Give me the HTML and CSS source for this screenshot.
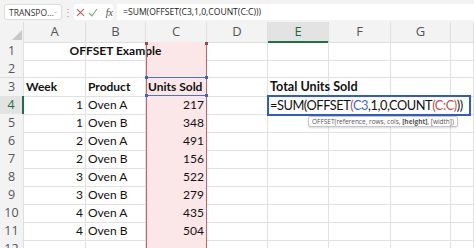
FILE: index.html
```html
<!DOCTYPE html>
<html>
<head>
  <title>OFFSET Example</title>
  <link rel="stylesheet" href="styles.css">
</head>
<body>
  <div class="app">
    <div class="toolbar">
      <div class="namebox">
        <span>TRANSPO...</span>
        <svg width="7" height="5" viewBox="0 0 7 5"><path d="M1 1l2.5 2.5L6 1" fill="none" stroke="#666" stroke-width="1"/></svg>
      </div>
      <span class="dots">&#8942;</span>
      <div class="fxbox">
        <svg width="9" height="9" viewBox="0 0 9 9"><path d="M1 1l7 7M8 1L1 8" stroke="#d9534f" stroke-width="1.1"/></svg>
        <svg width="10" height="9" viewBox="0 0 10 9"><path d="M1 5l3 3 5-7" fill="none" stroke="#6cb36c" stroke-width="1.1"/></svg>
        <i class="fx">fx</i>
      </div>
      <div class="formula">=SUM(OFFSET(C3,1,0,COUNT(C:C)))</div>
    </div>

    <div class="sheet">
      <div class="row head">
        <div class="corner"><svg width="10" height="10" viewBox="0 0 10 10"><polygon points="10,0 10,10 0,10" fill="#c8c8c8"/></svg></div>
        <div class="ch">A</div><div class="ch">B</div><div class="ch">C</div><div class="ch">D</div>
        <div class="ch active">E</div><div class="ch">F</div><div class="ch">G</div><div class="ch"></div>
      </div>

      <div class="row">
        <div class="rh">1</div><div class="c"></div><div class="c b center over">OFFSET Example</div><div class="c hl"></div><div class="c"></div><div class="c"></div><div class="c"></div><div class="c"></div><div class="c"></div>
      </div>
      <div class="row">
        <div class="rh">2</div><div class="c"></div><div class="c"></div><div class="c hl"></div><div class="c"></div><div class="c"></div><div class="c"></div><div class="c"></div><div class="c"></div>
      </div>
      <div class="row">
        <div class="rh">3</div><div class="c b">Week</div><div class="c b">Product</div><div class="c hl b">Units Sold</div><div class="c"></div><div class="c b over">Total Units Sold</div><div class="c"></div><div class="c"></div><div class="c"></div>
      </div>
      <div class="row">
        <div class="rh active">4</div><div class="c num">1</div><div class="c">Oven A</div><div class="c hl num">217</div><div class="c"></div><div class="c"></div><div class="c"></div><div class="c"></div><div class="c"></div>
      </div>
      <div class="row">
        <div class="rh">5</div><div class="c num">1</div><div class="c">Oven B</div><div class="c hl num">348</div><div class="c"></div><div class="c"></div><div class="c"></div><div class="c"></div><div class="c"></div>
      </div>
      <div class="row">
        <div class="rh">6</div><div class="c num">2</div><div class="c">Oven A</div><div class="c hl num">491</div><div class="c"></div><div class="c"></div><div class="c"></div><div class="c"></div><div class="c"></div>
      </div>
      <div class="row">
        <div class="rh">7</div><div class="c num">2</div><div class="c">Oven B</div><div class="c hl num">156</div><div class="c"></div><div class="c"></div><div class="c"></div><div class="c"></div><div class="c"></div>
      </div>
      <div class="row">
        <div class="rh">8</div><div class="c num">3</div><div class="c">Oven A</div><div class="c hl num">522</div><div class="c"></div><div class="c"></div><div class="c"></div><div class="c"></div><div class="c"></div>
      </div>
      <div class="row">
        <div class="rh">9</div><div class="c num">3</div><div class="c">Oven B</div><div class="c hl num">279</div><div class="c"></div><div class="c"></div><div class="c"></div><div class="c"></div><div class="c"></div>
      </div>
      <div class="row">
        <div class="rh">10</div><div class="c num">4</div><div class="c">Oven A</div><div class="c hl num">435</div><div class="c"></div><div class="c"></div><div class="c"></div><div class="c"></div><div class="c"></div>
      </div>
      <div class="row">
        <div class="rh">11</div><div class="c num">4</div><div class="c">Oven B</div><div class="c hl num">504</div><div class="c"></div><div class="c"></div><div class="c"></div><div class="c"></div><div class="c"></div>
      </div>
      <div class="row">
        <div class="rh">12</div><div class="c"></div><div class="c"></div><div class="c hl"></div><div class="c"></div><div class="c"></div><div class="c"></div><div class="c"></div><div class="c"></div>
      </div>

      <!-- range highlights and the cell editor sit over the grid -->
      <div class="range-col"></div>
      <div class="range-c3">
        <span class="knob tl"></span><span class="knob tr"></span>
        <span class="knob bl"></span><span class="knob br"></span>
      </div>
      <div class="editor">=SUM(OFFSET<span class="red">(</span><span class="blue">C3</span>,1,0,COUNT<span class="red">(C:C)</span>))</div>
      <div class="tip">OFFSET(reference, rows, cols, <b>[height]</b>, [width])</div>
    </div>
  </div>
</body>
</html>
```

FILE: styles.css
```css
body {
  margin: 0;
  background: #ffffff;
}

.app {
  width: 474px;
  height: 248px;
  overflow: hidden;
  font-family: "Open Sans", "Noto Sans", sans-serif;
}

/* formula bar */
.toolbar {
  display: flex;
  align-items: center;
  height: 22px;
  padding: 2px 0 0 4px;
  box-sizing: border-box;
  background: #f3f3f3;
}

.namebox {
  display: flex;
  align-items: center;
  justify-content: space-between;
  width: 58px;
  height: 16px;
  padding: 0 4px;
  box-sizing: border-box;
  background: white;
  border: 1px solid #dcdcdc;
  border-radius: 3px;
  font-size: 8.5px;
  color: #333;
}

.dots {
  width: 12px;
  text-align: center;
  font-size: 10px;
  color: #999;
}

.fxbox {
  display: flex;
  align-items: center;
  gap: 3px;
  width: 39px;
  height: 16px;
  padding-left: 2px;
  box-sizing: border-box;
  background: white;
  border-radius: 3px;
  margin-right: 4px;
}

.fx {
  margin-left: 5px;
  font-family: "Liberation Serif", serif;
  font-size: 10px;
  color: #444;
}

.formula {
  flex: 1;
  height: 16px;
  line-height: 16px;
  padding-left: 6px;
  background: white;
  font-size: 8.6px;
  color: #222;
}

/* grid */
.sheet {
  position: relative;
}

.row {
  display: grid;
  grid-template-columns: 24px 62px 60px 61px 61px 61px 62px 60px 1fr;
  height: 18px;
}

.row.head {
  height: 20px;
}

.corner,
.ch,
.rh {
  background: #f3f3f3;
  color: #555;
  box-sizing: border-box;
  border-right: 1px solid #dedede;
  border-bottom: 1px solid #dedede;
}

.corner {
  display: flex;
  align-items: flex-end;
  justify-content: flex-end;
  padding: 0 1px 2px 0;
}

.ch {
  text-align: center;
  font-size: 13px;
  line-height: 19px;
}

.ch.active {
  background: #e3e3e3;
  color: #1e6b41;
  border-bottom: 2px solid #1e7145;
}

.rh {
  text-align: center;
  font-size: 12.5px;
  line-height: 17px;
}

.rh.active {
  color: #1e7145;
  background: #e3e3e3;
  border-right: 2px solid #1e7145;
}

.c {
  box-sizing: border-box;
  border-right: 1px solid #e1e1e1;
  border-bottom: 1px solid #e1e1e1;
  padding: 0 2px;
  font-family: Lato, "Liberation Sans", sans-serif;
  font-size: 12px;
  line-height: 18px;
  color: #111;
  white-space: nowrap;
}

.b {
  font-weight: bold;
}

.num {
  text-align: right;
}

.center {
  display: flex;
  justify-content: center;
}

.over {
  overflow: visible;
  position: relative;
  z-index: 1;
}

.over.b:not(.center) {
  font-size: 12.6px;
}

.hl {
  background: #fbe6e8;
}

.range-col {
  position: absolute;
  left: 146px;
  top: 20px;
  width: 61px;
  height: 230px;
  box-sizing: border-box;
  border-left: 1px solid #c8626a;
  border-right: 1px solid #c8626a;
  z-index: 2;
}

.range-col::before,
.range-col::after {
  content: "";
  position: absolute;
  top: 0;
  width: 3px;
  height: 3px;
  background: #a8424a;
}

.range-col::before {
  left: -2px;
}

.range-col::after {
  right: -2px;
}

.range-c3 {
  position: absolute;
  left: 146px;
  top: 55px;
  width: 61px;
  height: 19px;
  box-sizing: border-box;
  border-top: 1px solid #4a72d6;
  border-bottom: 1px solid #4a72d6;
  z-index: 3;
}

.knob {
  position: absolute;
  width: 3px;
  height: 3px;
  background: #3b63cf;
}

.knob.tl { left: -1px; top: -2px; }
.knob.tr { right: -1px; top: -2px; }
.knob.bl { left: -1px; bottom: -2px; }
.knob.br { right: -1px; bottom: -2px; }

.editor {
  position: absolute;
  left: 267px;
  top: 73px;
  width: 204px;
  height: 21px;
  box-sizing: border-box;
  padding-left: 1px;
  background: white;
  border: 2px solid #2d5bd3;
  font-family: Lato, "Liberation Sans", sans-serif;
  font-size: 12.8px;
  letter-spacing: -0.45px;
  line-height: 17px;
  color: #111;
  white-space: nowrap;
  z-index: 4;
}

.red {
  color: #c0504d;
}

.blue {
  color: #3d6ad6;
}

.tip {
  position: absolute;
  left: 308px;
  top: 94px;
  padding: 0 3px;
  background: white;
  border: 1px solid #c6c6c6;
  border-radius: 2px;
  box-shadow: 0 1px 2px rgba(0, 0, 0, 0.15);
  font-size: 6.5px;
  line-height: 9px;
  color: #555;
  white-space: nowrap;
  z-index: 4;
}
```
